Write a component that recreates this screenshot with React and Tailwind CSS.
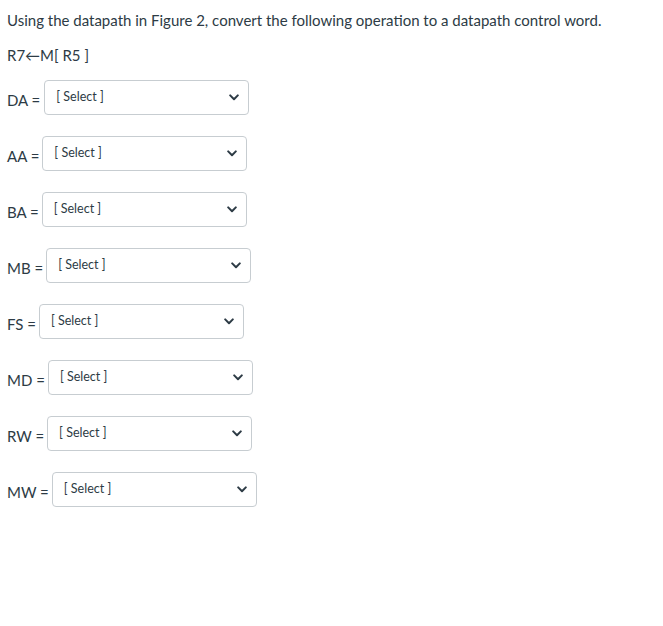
const rows = [
  { label: 'DA', gap: 'ml-[4px]' },
  { label: 'AA', gap: 'ml-[3px]' },
  { label: 'BA', gap: 'ml-[3px]' },
  { label: 'MB', gap: 'ml-[3px]' },
  { label: 'FS', gap: 'ml-[3px]' },
  { label: 'MD', gap: 'ml-[3px]' },
  { label: 'RW', gap: 'ml-[3px]' },
  { label: 'MW', gap: 'ml-[3px]' },
]

function Chevron() {
  return (
    <svg width="10" height="7" viewBox="0 0 10 7" className="text-[#2d3b45]">
      <path d="M1.2 1.4 L5 5.2 L8.8 1.4" fill="none" stroke="currentColor" strokeWidth="2" strokeLinecap="round" strokeLinejoin="round" />
    </svg>
  )
}

function SelectBox({ gap }) {
  return (
    <div className={`${gap} flex h-[35px] w-[205px] items-center justify-between rounded-[4px] border border-[#c7cdd1] bg-white pl-[11px] pr-[9px]`}>
      <span className="-mt-[1px] text-[12.5px] text-[#2d3b45]">[ Select ]</span>
      <Chevron />
    </div>
  )
}

export default function App() {
  return (
    <div className="min-h-[626px] bg-white px-[7px] pt-[10px] text-[#2d3b45]" style={{ fontFamily: 'Lato, "Noto Sans", sans-serif' }}>
      <p className="text-[15px] leading-[20px]">Using the datapath in Figure 2, convert the following operation to a datapath control word.</p>
      <p className="mt-[15px] text-[15px] leading-[20px]">R7←M[ R5 ]</p>
      <div className="mt-[15px] flex flex-col gap-[21px]">
        {rows.map(r => (
          <div key={r.label} className="flex items-center">
            <span className="mt-[6px] text-[15px]">{r.label} =</span>
            <SelectBox gap={r.gap} />
          </div>
        ))}
      </div>
    </div>
  )
}
